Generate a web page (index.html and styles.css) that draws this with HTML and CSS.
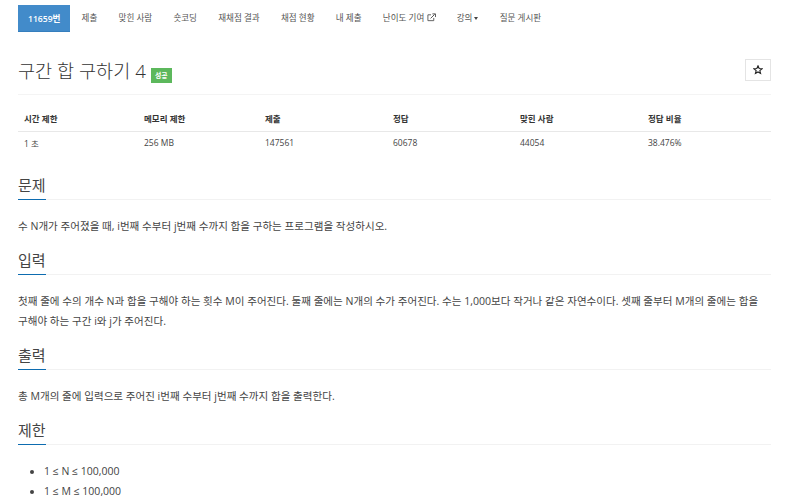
FILE: index.html
```html
<!DOCTYPE html>
<html lang="ko">
<head>
<meta charset="utf-8">
<title>구간 합 구하기 4</title>
<link rel="stylesheet" href="styles.css">
</head>
<body>
<div class="page">
<nav class="tabs">
  <a class="tab active">11659번</a>
  <a class="tab">제출</a>
  <a class="tab">맞힌 사람</a>
  <a class="tab">숏코딩</a>
  <a class="tab">재채점 결과</a>
  <a class="tab">채점 현황</a>
  <a class="tab">내 제출</a>
  <a class="tab">난이도 기여 <svg class="ext" viewBox="0 0 10 10" width="9" height="9"><path d="M7.5 5.5v3h-6.5v-6.5h3.5" fill="none" stroke="#555" stroke-width="1"/><path d="M4 6l4.5-4.5M6 1h3.5v3.5" fill="none" stroke="#555" stroke-width="1.1"/></svg></a>
  <a class="tab">강의<span class="caret"></span></a>
  <a class="tab">질문 게시판</a>
</nav>
<header class="title-row">
  <h1 class="title">구간 합 구하기 4 <span class="badge">성공</span></h1>
  <button class="star"><svg viewBox="0 0 12 12" width="10" height="10"><path d="M6 1l1.4 3.2 3.5.3-2.7 2.3.9 3.4L6 8.4 2.9 10.2l.9-3.4L1.1 4.5l3.5-.3z" fill="none" stroke="#222" stroke-width="1.3"/></svg></button>
</header>
<table class="info">
  <thead><tr><th class="c1">시간 제한</th><th class="c2">메모리 제한</th><th class="c3">제출</th><th class="c4">정답</th><th class="c5">맞힌 사람</th><th>정답 비율</th></tr></thead>
  <tbody><tr><td>1 초</td><td>256 MB</td><td>147561</td><td>60678</td><td>44054</td><td>38.476%</td></tr></tbody>
</table>
<section class="sec first">
  <h2 class="head"><span>문제</span></h2>
  <p>수 N개가 주어졌을 때, i번째 수부터 j번째 수까지 합을 구하는 프로그램을 작성하시오.</p>
</section>
<section class="sec">
  <h2 class="head"><span>입력</span></h2>
  <p>첫째 줄에 수의 개수 N과 합을 구해야 하는 횟수 M이 주어진다. 둘째 줄에는 N개의 수가 주어진다. 수는 1,000보다 작거나 같은 자연수이다. 셋째 줄부터 M개의 줄에는 합을 구해야 하는 구간 i와 j가 주어진다.</p>
</section>
<section class="sec">
  <h2 class="head"><span>출력</span></h2>
  <p>총 M개의 줄에 입력으로 주어진 i번째 수부터 j번째 수까지 합을 출력한다.</p>
</section>
<section class="sec">
  <h2 class="head"><span>제한</span></h2>
  <ul class="limits"><li>1 ≤ N ≤ 100,000</li><li>1 ≤ M ≤ 100,000</li></ul>
</section>
</div>
</body>
</html>
```
FILE: styles.css
```css
html, body { margin: 0; padding: 0; background: #fff; height: 501px; overflow: hidden; }
body { font-family: "Open Sans", "Noto Sans CJK KR", sans-serif; color: #333; font-size: 10.5px; }
.page { padding: 5px 29px 0 18px; }
.tabs { display: flex; height: 27px; font-size: 8.55px; color: #555; align-items: center; }
.tab { padding: 0 10.6px; line-height: 27px; white-space: nowrap; }
.tab.active { background: #428bca; color: #fff; font-weight: 600; border-bottom: 1px solid #357ebd; padding: 0 10px; font-size: 8.6px; line-height: 28px; width: 52px; margin-right: 1px; height: 27px; box-sizing: border-box; }
.ext { vertical-align: -1px; }
.caret { display: inline-block; border-top: 3px solid #444; border-left: 2.5px solid transparent; border-right: 2.5px solid transparent; margin-left: 2px; vertical-align: 1px; }
.title-row { display: flex; justify-content: space-between; align-items: flex-start; margin-top: 25px; height: 37px; border-bottom: 1px solid #f4f4f4; }
.title { margin: 0; font-weight: 300; font-size: 18.6px; line-height: 27px; color: #333; }
.badge { display: inline-block; background: #5cb85c; color: #fff; font-size: 6.8px; font-weight: 600; padding: 0 4.5px; line-height: 15px; margin-left: 0; vertical-align: 0; }
.star { width: 26px; height: 22px; margin-top: 2px; border: 1px solid #e4e4e4; background: #fff; padding: 0; display: flex; align-items: center; justify-content: center; box-sizing: border-box; }
.info { width: 100%; margin-top: 10px; border-collapse: collapse; font-size: 8.5px; table-layout: fixed; }
.info th, .info td { box-sizing: border-box; }
.info th { text-align: left; font-weight: 700; padding: 1px 6px 0; height: 26px; border-bottom: 1px solid #e8e8e8; color: #333; }
.info td { padding: 0 6px; height: 23px; color: #444; }
.c1 { width: 120px; } .c2 { width: 121px; } .c3 { width: 128px; } .c4 { width: 127px; } .c5 { width: 128px; }
.sec { margin-top: 13.4px; }
.sec.first { margin-top: 21px; }
.head { margin: 0; font-size: 15px; font-weight: 400; line-height: 20px; border-bottom: 1px solid #f2f2f2; height: 24px; color: #444; }
.head span { display: inline-block; height: 24px; min-width: 27px; white-space: nowrap; border-bottom: 1px solid #0d6cb0; }
.sec p { margin: 16.2px 0 0; line-height: 20.2px; font-size: 10.56px; color: #444; word-break: keep-all; }
.limits { margin: 16.5px 0 0; padding: 0 0 0 26px; line-height: 20px; color: #444; }
```
